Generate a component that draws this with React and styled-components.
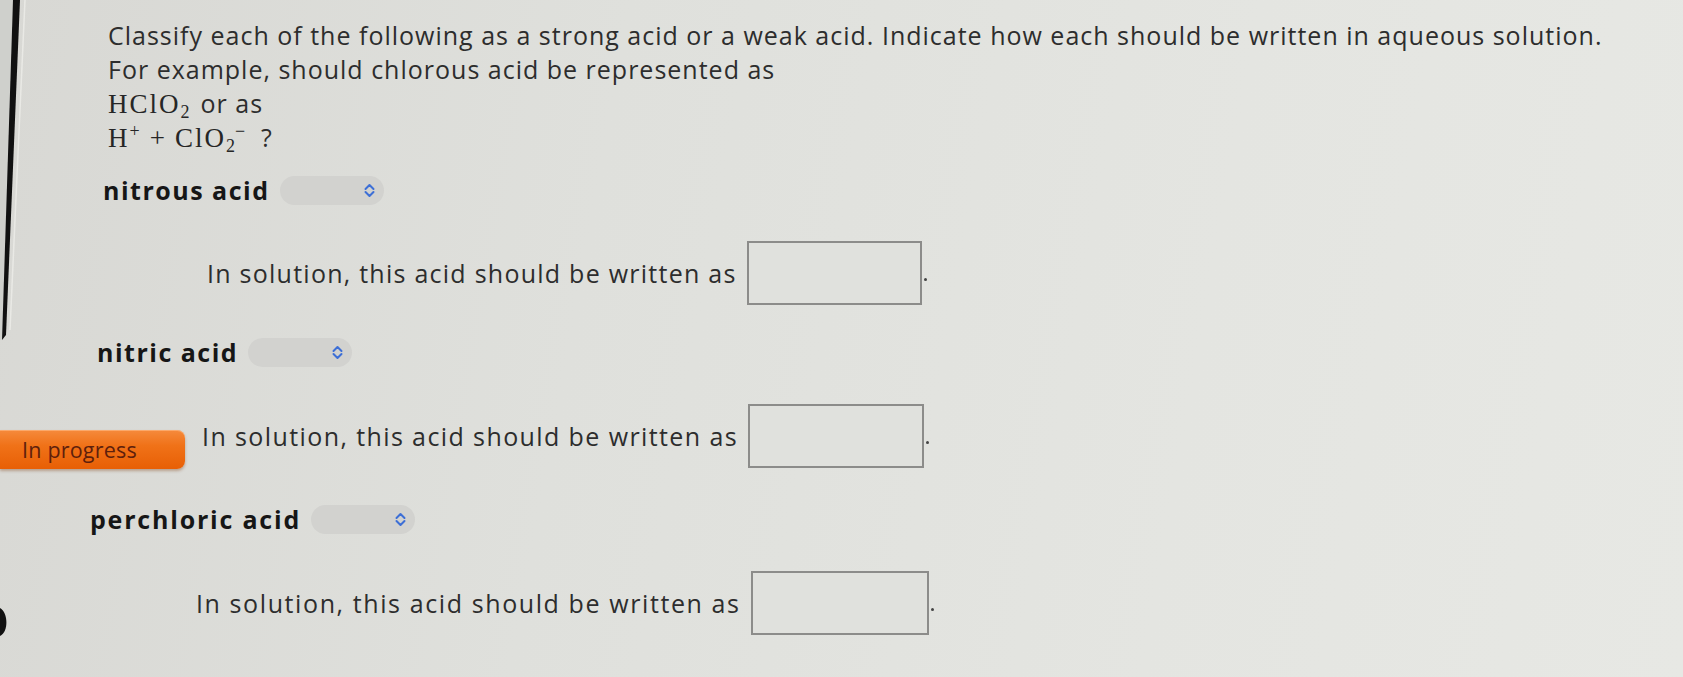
import React from "react";
import styled, { createGlobalStyle } from "styled-components";

const Global = createGlobalStyle`
  html, body { margin: 0; padding: 0; }
  body {
    width: 1683px;
    height: 677px;
    overflow: hidden;
    font-family: "Open Sans", "Noto Sans", sans-serif;
  }
`;

const Page = styled.div`
  position: relative;
  width: 1683px;
  height: 677px;
  overflow: hidden;
  background: linear-gradient(100deg, #d8d8d4 0%, #dfe0dc 35%, #e4e5e1 70%, #e7e8e4 100%);
  color: #2b2b2b;
`;

const Content = styled.div`
  display: flex;
  flex-direction: column;
  padding-top: 18px;
`;

const Prompt = styled.div`
  padding-left: 108px;
  font-size: 25px;
  letter-spacing: 1px;
  color: #2d2d2d;
`;

const Line = styled.div`
  height: 34px;
  line-height: 34px;
  white-space: nowrap;
`;

const Math = styled.span`
  font-family: "Liberation Serif", "DejaVu Serif", serif;
  font-size: 27px;
  letter-spacing: 2px;
  line-height: 0;
  color: #262626;
  margin-right: ${(p) => p.$gap || 11}px;

  sub, sup {
    font-size: 18px;
    letter-spacing: 0;
    line-height: 0;
  }
  sub { vertical-align: -5px; }
  sup { vertical-align: 10px; }
`;

const Op = styled.span`
  margin: 0 8px 0 10px;
`;

const SelectRow = styled.div`
  display: flex;
  align-items: center;
  height: 30px;
  margin-top: ${(p) => p.$top}px;
  padding-left: ${(p) => p.$indent}px;
`;

const Label = styled.span`
  font-size: 25px;
  font-weight: 700;
  letter-spacing: ${(p) => p.$spacing}px;
  color: #161616;
  white-space: nowrap;
`;

const Pill = styled.div`
  display: flex;
  align-items: center;
  justify-content: flex-end;
  box-sizing: border-box;
  width: 104px;
  height: 29px;
  margin-left: 10px;
  padding-right: 9px;
  border-radius: 15px;
  background: #d2d2cf;
`;

const AnswerRow = styled.div`
  display: flex;
  align-items: center;
  height: 64px;
  margin-top: ${(p) => p.$top}px;
  padding-left: ${(p) => p.$indent}px;
  font-size: 25px;
  letter-spacing: ${(p) => p.$spacing}px;
  color: #2d2d2d;
  white-space: nowrap;
`;

const AnswerBox = styled.div`
  box-sizing: border-box;
  width: ${(p) => p.$w}px;
  height: 64px;
  margin-left: 10px;
  border: 2px solid #8c8c8a;
  background: #e0e1dd;
`;

const Dot = styled.span`
  width: 3px;
  height: 3px;
  margin-left: 2px;
  margin-top: 12px;
  border-radius: 50%;
  background: #444;
`;

const StatusTab = styled.div`
  position: absolute;
  left: 0;
  top: 430px;
  box-sizing: border-box;
  width: 185px;
  height: 39px;
  padding-left: 22px;
  display: flex;
  align-items: center;
  border-radius: 0 8px 8px 0;
  background: linear-gradient(180deg, #f58a3c 0%, #f07218 40%, #e85f05 100%);
  box-shadow: 0 2px 3px rgba(120, 50, 0, 0.35), inset 0 1px 0 rgba(255, 190, 140, 0.6);
  font-size: 21.5px;
  letter-spacing: 0.2px;
  color: #5e200c;
  white-space: nowrap;
`;

const Bezel = styled.svg`
  position: absolute;
  left: 0;
  top: 0;
  pointer-events: none;
`;

const Chevron = () => (
  <svg width="11" height="15" viewBox="0 0 11 15" fill="none">
    <path d="M1.5 6 L5.5 2 L9.5 6" stroke="#3d6fd6" strokeWidth="2" strokeLinecap="round" strokeLinejoin="round" />
    <path d="M1.5 9 L5.5 13 L9.5 9" stroke="#3d6fd6" strokeWidth="2" strokeLinecap="round" strokeLinejoin="round" />
  </svg>
);

const Select = ({ label, indent, top, spacing }) => (
  <SelectRow $indent={indent} $top={top}>
    <Label $spacing={spacing}>{label}</Label>
    <Pill>
      <Chevron />
    </Pill>
  </SelectRow>
);

const Answer = ({ indent, top, w, spacing }) => (
  <AnswerRow $indent={indent} $top={top} $spacing={spacing}>
    In solution, this acid should be written as
    <AnswerBox $w={w} />
    <Dot />
  </AnswerRow>
);

export default function App() {
  return (
    <>
      <Global />
      <Page>
        <Content>
          <Prompt>
            <Line>
              Classify each of the following as a strong acid or a weak acid. Indicate how each should be written in aqueous solution.
            </Line>
            <Line>For example, should chlorous acid be represented as</Line>
            <Line>
              <Math>
                HClO<sub>2</sub>
              </Math>
              or as
            </Line>
            <Line>
              <Math $gap={16}>
                H<sup>+</sup>
                <Op>+</Op>
                ClO<sub>2</sub>
                <sup>−</sup>
              </Math>
              ?
            </Line>
          </Prompt>

          <Select label="nitrous acid" indent={103} top={21} spacing={1.5} />
          <Answer indent={207} top={36} w={175} spacing={1.25} />
          <Select label="nitric acid" indent={97} top={32} spacing={1.5} />
          <Answer indent={202} top={37} w={176} spacing={1.4} />
          <Select label="perchloric acid" indent={90} top={36} spacing={1.8} />
          <Answer indent={196} top={37} w={178} spacing={1.6} />
        </Content>

        <StatusTab>In progress</StatusTab>

        <Bezel width="40" height="677" viewBox="0 0 40 677">
          <polygon points="0,0 13,0 2,340 0,340" fill="#cfd0cc" />
          <polygon points="13,0 20,0 6,335 2,340" fill="#111" />
          <line x1="25" y1="0" x2="10" y2="330" stroke="#eeeeea" strokeWidth="1.5" opacity="0.8" />
          <path d="M0 608 C 8 612, 9 632, 0 636 Z" fill="#111" />
        </Bezel>
      </Page>
    </>
  );
}
